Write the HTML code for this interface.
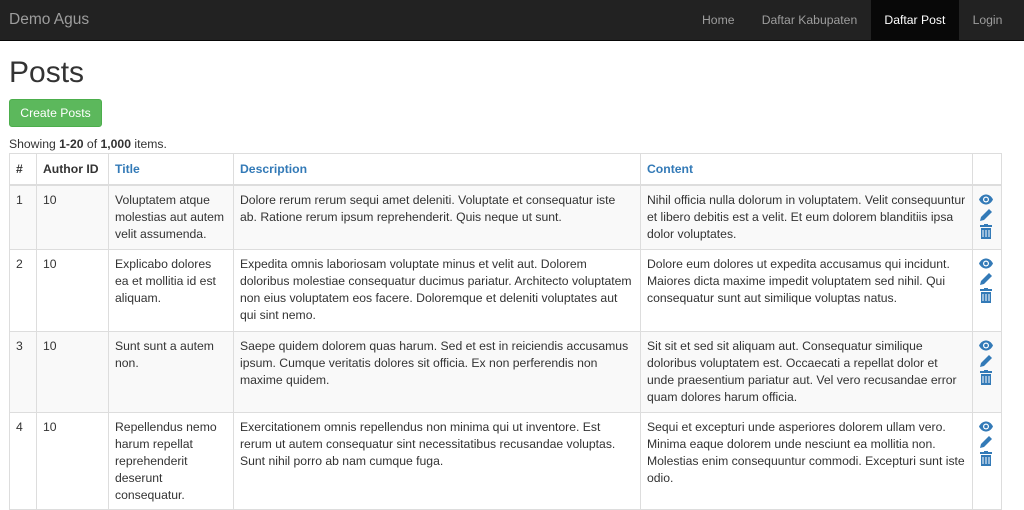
<!DOCTYPE html>
<html><head><style>
body{margin:0;font-family:"Liberation Sans",sans-serif;font-size:12.2px;color:#333;background:#fff;width:1024px;height:494px;overflow:hidden}
.nav{height:41px;background:#222;border-bottom:1px solid #080808;box-sizing:border-box;position:relative}
.brand{position:absolute;left:9px;top:11px;font-size:15.5px;color:#9d9d9d}
.links{position:absolute;right:8px;top:0;display:flex;height:41px}
.links a{color:#9d9d9d;padding:0 13.6px;line-height:40px;font-size:12.2px;text-decoration:none;white-space:nowrap}
.links a.act{background:#080808;color:#fff}
h1{font-weight:500;font-size:30px;margin:0;position:absolute;left:9px;top:56px}
.btn{position:absolute;left:9px;top:99px;width:93px;height:28px;background:#5cb85c;border:1px solid #4cae4c;box-sizing:border-box;border-radius:3px;color:#fff;text-align:center;line-height:26px;font-size:12.2px}
.sum{position:absolute;left:9px;top:137px}
table{position:absolute;left:9px;top:153px;width:992px;border-collapse:collapse;table-layout:fixed}
td,th{border:1px solid #ddd;padding:6px 6px 5px;vertical-align:top;line-height:17px;text-align:left}
th{border-bottom:2px solid #ddd;height:15px;padding:7px 6px 6px;white-space:nowrap}
th.l{color:#337ab7}
tr.o td{background:#f9f9f9}
.ic{color:#337ab7}
.ic svg{display:block;margin-bottom:2px}
</style></head><body>
<div class="nav"><span class="brand">Demo Agus</span>
<div class="links"><a>Home</a><a>Daftar Kabupaten</a><a class="act">Daftar Post</a><a>Login</a></div></div>
<h1>Posts</h1>
<div class="btn">Create Posts</div>
<div class="sum">Showing <b>1-20</b> of <b>1,000</b> items.</div>
<table>
<colgroup><col style="width:27px"><col style="width:72px"><col style="width:125px"><col style="width:407px"><col style="width:332px"><col style="width:29px"></colgroup>
<tr><th>#</th><th>Author ID</th><th class="l">Title</th><th class="l">Description</th><th class="l">Content</th><th></th></tr>
<tr class="o" style="height:64px"><td>1</td><td>10</td><td>Voluptatem atque molestias aut autem velit assumenda.</td><td>Dolore rerum rerum sequi amet deleniti. Voluptate et consequatur iste ab. Ratione rerum ipsum reprehenderit. Quis neque ut sunt.</td><td>Nihil officia nulla dolorum in voluptatem. Velit consequuntur et libero debitis est a velit. Et eum dolorem blanditiis ipsa dolor voluptates.</td><td class="ic"></td></tr>
<tr style="height:82px"><td>2</td><td>10</td><td>Explicabo dolores ea et mollitia id est aliquam.</td><td>Expedita omnis laboriosam voluptate minus et velit aut. Dolorem doloribus molestiae consequatur ducimus pariatur. Architecto voluptatem non eius voluptatem eos facere. Doloremque et deleniti voluptates aut qui sint nemo.</td><td>Dolore eum dolores ut expedita accusamus qui incidunt. Maiores dicta maxime impedit voluptatem sed nihil. Qui consequatur sunt aut similique voluptas natus.</td><td class="ic"></td></tr>
<tr class="o" style="height:81px"><td>3</td><td>10</td><td>Sunt sunt a autem non.</td><td>Saepe quidem dolorem quas harum. Sed et est in reiciendis accusamus ipsum. Cumque veritatis dolores sit officia. Ex non perferendis non maxime quidem.</td><td>Sit sit et sed sit aliquam aut. Consequatur similique doloribus voluptatem est. Occaecati a repellat dolor et unde praesentium pariatur aut. Vel vero recusandae error quam dolores harum officia.</td><td class="ic"></td></tr>
<tr><td>4</td><td>10</td><td>Repellendus nemo harum repellat reprehenderit deserunt consequatur.</td><td>Exercitationem omnis repellendus non minima qui ut inventore. Est rerum ut autem consequatur sint necessitatibus recusandae voluptas. Sunt nihil porro ab nam cumque fuga.</td><td>Sequi et excepturi unde asperiores dolorem ullam vero. Minima eaque dolorem unde nesciunt ea mollitia non. Molestias enim consequuntur commodi. Excepturi sunt iste odio.</td><td class="ic"></td></tr>
</table>
<script>
var s='<svg width="14" height="13" viewBox="0 0 14 12" style="margin-top:1px"><path d="M0 6C2 2 5 1 7 1s5 1 7 5c-2 4-5 5-7 5S2 10 0 6z" fill="#337ab7"/><circle cx="7" cy="6" r="3" fill="#fff"/><circle cx="7" cy="6" r="1.8" fill="#337ab7"/></svg><svg width="14" height="14" viewBox="0 0 14 14"><path d="M1 13l1-4 8-8 3 3-8 8z" fill="#337ab7"/></svg><svg width="14" height="15" viewBox="0 0 14 15"><rect x="1" y="1" width="12" height="2" fill="#337ab7"/><rect x="5" y="0" width="4" height="2" fill="#337ab7"/><path d="M2 4h10v11H2z" fill="#337ab7"/><path d="M4 6v7M7 6v7M10 6v7" stroke="#fff" stroke-width="1"/></svg>';
document.querySelectorAll('td.ic').forEach(function(e){e.innerHTML=s});
</script>
</body></html>
